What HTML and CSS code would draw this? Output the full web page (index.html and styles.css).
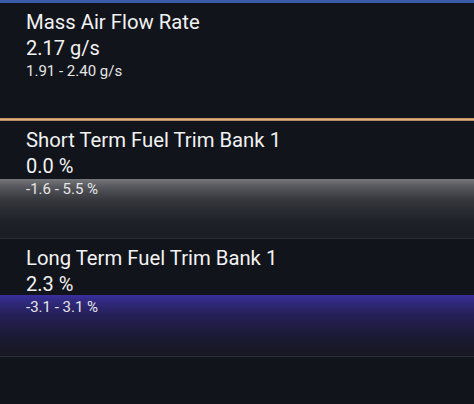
FILE: index.html
```html
<!DOCTYPE html>
<html>
<head>
<meta charset="utf-8">
<link rel="stylesheet" href="styles.css">
</head>
<body>
<div class="screen">
  <div class="topbar"></div>
  <div class="row">
    <div class="title">Mass Air Flow Rate</div>
    <div class="value">2.17 g/s</div>
    <div class="range">1.91 - 2.40 g/s</div>
  </div>
  <div class="sep-orange"></div>
  <div class="row row-gray">
    <div class="title">Short Term Fuel Trim Bank 1</div>
    <div class="value">0.0 %</div>
    <div class="range">-1.6 - 5.5 %</div>
  </div>
  <div class="sep"></div>
  <div class="row row-purple">
    <div class="title">Long Term Fuel Trim Bank 1</div>
    <div class="value">2.3 %</div>
    <div class="range">-3.1 - 3.1 %</div>
  </div>
  <div class="sep"></div>
</div>
</body>
</html>
```
FILE: styles.css
```css
html, body {
  margin: 0;
  padding: 0;
  background: #11141b;
}
.screen {
  width: 474px;
  height: 404px;
  overflow: hidden;
  background: #11141b;
  font-family: Roboto, "Noto Sans", sans-serif;
  color: #f2f2f2;
  display: flex;
  flex-direction: column;
}
.topbar {
  height: 3px;
  background: #3a5ca6;
}
.row {
  height: 115px;
  padding: 7px 0 0 26px;
  box-sizing: border-box;
  display: flex;
  flex-direction: column;
}
.row-gray, .row-purple {
  height: 117px;
}
.row-gray {
  background: linear-gradient(to bottom, transparent 0, transparent 58px, #76777a 58px, #55575c 66px, #33353b 80px, #1f2229 100px, #1a1d24 117px);
}
.row-purple {
  background: linear-gradient(to bottom, transparent 0, transparent 56px, #3a2f9e 56px, #312a80 62px, #251f58 76px, #1b1a36 96px, #16171f 117px);
}
.title {
  font-size: 20.3px;
  line-height: 24px;
}
.value {
  font-size: 20px;
  line-height: 28px;
}
.range {
  font-size: 15px;
  line-height: 18px;
  color: #e6e6e6;
}
.sep-orange {
  height: 3px;
  background: linear-gradient(to bottom, #9a7450 0, #e2b07c 1px, #e2b07c 2px, #8a6846 3px);
}
.sep {
  height: 1px;
  background: #2a2e36;
}
```
